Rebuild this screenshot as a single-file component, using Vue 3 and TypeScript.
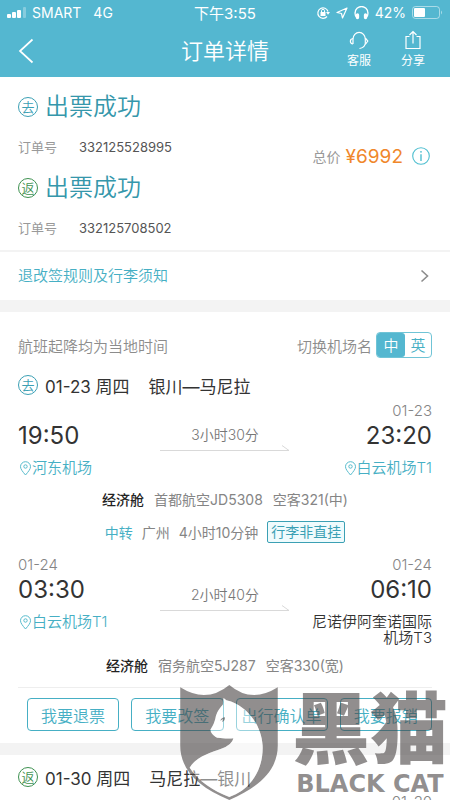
<script setup lang="ts">
import { ref } from 'vue'

interface Stop {
  date?: string
  time: string
  airport: string
  linked: boolean
}

interface Segment {
  from: Stop
  to: Stop
  duration: string
  cabin: string
  flight: string
  plane: string
}

const orders = [
  { mark: '去', kind: 'go', status: '出票成功', no: '332125528995' },
  { mark: '返', kind: 'back', status: '出票成功', no: '332125708502' },
]

const first: Segment = {
  from: { time: '19:50', airport: '河东机场', linked: true },
  to: { date: '01-23', time: '23:20', airport: '白云机场T1', linked: true },
  duration: '3小时30分',
  cabin: '经济舱',
  flight: '首都航空JD5308',
  plane: '空客321(中)',
}

const second: Segment = {
  from: { date: '01-24', time: '03:30', airport: '白云机场T1', linked: true },
  to: { date: '01-24', time: '06:10', airport: '尼诺伊阿奎诺国际机场T3', linked: false },
  duration: '2小时40分',
  cabin: '经济舱',
  flight: '宿务航空5J287',
  plane: '空客330(宽)',
}

const segments = [first, second]
const actions = ['我要退票', '我要改签', '出行确认单', '我要报销']
const languages = ['中', '英']
const language = ref('中')
</script>

<template>
  <div class="page">
    <header class="header">
      <div class="status">
        <div class="status-side">
          <svg class="signal" width="20" height="12" viewBox="0 0 20 12" fill="#fff">
            <rect x="0" y="7" width="4" height="4" rx="1" />
            <rect x="5" y="5" width="4" height="6" rx="1" />
            <rect x="10" y="3" width="4" height="8" rx="1" />
            <rect x="16" y="0" width="3" height="11" rx="1" opacity=".3" />
          </svg>
          <span>SMART</span>
          <span class="network">4G</span>
        </div>
        <span class="clock">下午3:55</span>
        <div class="status-side right">
          <svg width="14" height="14" viewBox="0 0 14 14" fill="none" stroke="#fff">
            <path d="M11 10.5A5.2 5.2 0 1 1 12 5.5" stroke-width="1.2" />
            <path d="M10 6h4l-2 2.700z" fill="#fff" stroke="none" />
            <rect x="4.500" y="6" width="5" height="4" fill="#fff" stroke="none" />
            <path d="M5.500 6V4.800a1.500 1.500 0 0 1 3 0V6" />
          </svg>
          <svg width="12" height="12" viewBox="0 0 12 12" fill="none" stroke="#fff" stroke-width="1.200">
            <path d="M11 1 1 5.500l4.500 1L6.500 11z" stroke-linejoin="round" />
          </svg>
          <svg width="15" height="14" viewBox="0 0 15 14" fill="none" stroke="#fff" stroke-width="1.300">
            <path d="M3 12C1 10 1 7.500 1.200 6.500a6.300 6 0 0 1 12.600 0C14 7.500 14 10 12 12" />
            <rect x="2.500" y="8" width="2" height="4.500" rx="1" fill="#fff" />
            <rect x="10.500" y="8" width="2" height="4.500" rx="1" fill="#fff" />
          </svg>
          <span>42%</span>
          <svg width="31" height="13" viewBox="0 0 31 13" fill="none">
            <rect x=".5" y=".5" width="27" height="12" rx="3" stroke="#fff" opacity=".5" />
            <rect x="2" y="2" width="11" height="9" rx="1" fill="#fff" />
            <path d="M29 4.500v4q2-2 0-4" fill="#fff" opacity=".5" />
          </svg>
        </div>
      </div>
      <div class="nav">
        <button class="nav-back" type="button" aria-label="返回">
          <svg width="16" height="26" viewBox="0 0 16 26" fill="none" stroke="#fff" stroke-width="1.700">
            <path d="M14.500 1.500 2 13l12.500 11.500" />
          </svg>
        </button>
        <h1>订单详情</h1>
        <div class="nav-tools">
          <button type="button">
            <svg width="20" height="20" viewBox="0 0 20 20" fill="none" stroke="#fff" stroke-width="1.200">
              <path d="M4 14V9a6 6.500 0 0 1 12.300 0v4.500C15.800 16 13.500 18 10.500 18.500" />
              <path d="M4 8.500C.5 9 .5 13.500 4 14M16.300 8l2.500 3-2.500 3.500" />
            </svg>
            <span>客服</span>
          </button>
          <button type="button">
            <svg width="20" height="20" viewBox="0 0 20 20" fill="none" stroke="#fff" stroke-width="1.200">
              <path d="M6.500 6.500H3v12h14v-12h-3.500M10 13.500V1.500M6.500 5 10 1.500 13.500 5" />
            </svg>
            <span>分享</span>
          </button>
        </div>
      </div>
    </header>

    <main>
      <section class="summary">
        <div class="orders">
          <div v-for="o in orders" :key="o.no" class="order">
            <div class="order-title">
              <span class="mark" :class="o.kind">{{ o.mark }}</span>
              <h2>{{ o.status }}</h2>
            </div>
            <div class="order-no">
              <span class="label">订单号</span>
              <span>{{ o.no }}</span>
            </div>
          </div>
        </div>
        <div class="total">
          <span class="label">总价</span>
          <strong>¥6992</strong>
          <button type="button" aria-label="价格明细">
            <svg width="18" height="18" viewBox="0 0 18 18" fill="none" stroke="#4fbfd0" stroke-width="1.100">
              <circle cx="9" cy="9" r="8.300" />
              <path d="M9 7.300v6.700" stroke-width="1.400" />
              <circle cx="9" cy="4.800" r=".9" fill="#4fbfd0" stroke="none" />
            </svg>
          </button>
        </div>
      </section>

      <a class="rules" href="#rules">
        <span>退改签规则及行李须知</span>
        <svg width="10" height="14" viewBox="0 0 10 14" fill="none" stroke="#8c8c8c" stroke-width="1.600">
          <path d="M1.500 1.500 7.500 7l-6 5.500" />
        </svg>
      </a>

      <section class="trip">
        <div class="notice">
          <span>航班起降均为当地时间</span>
          <div class="switch">
            <span>切换机场名</span>
            <div class="toggle">
              <button
                v-for="l in languages"
                :key="l"
                type="button"
                :class="{ active: language === l }"
                :aria-pressed="language === l"
                @click="language = l"
              >{{ l }}</button>
            </div>
          </div>
        </div>

        <div class="route">
          <span class="mark go">去</span>
          <span>01-23 周四</span>
          <span class="cities">银川—马尼拉</span>
        </div>

        <template v-for="(s, i) in segments" :key="s.flight">
          <div class="segment">
            <div class="stop">
              <span class="date">{{ s.from.date }}</span>
              <span class="time">{{ s.from.time }}</span>
              <a class="airport" href="#map">
                <svg width="14" height="15" viewBox="0 0 14 15" fill="none" stroke="#58bccd">
                  <path d="M7.500 14C4.500 10.500 2.500 8 2.500 5.700a5 5 0 0 1 10 0C12.500 8 10.500 10.500 7.500 14z" />
                  <circle cx="7.500" cy="5.500" r="1.700" />
                </svg>{{ s.from.airport }}</a>
            </div>
            <div class="duration">
              <span>{{ s.duration }}</span>
              <svg viewBox="0 0 130 6" fill="none" stroke="#d9d9d9">
                <path d="M0 5.500h129L122 .5" />
              </svg>
            </div>
            <div class="stop end">
              <span class="date">{{ s.to.date }}</span>
              <span class="time">{{ s.to.time }}</span>
              <a v-if="s.to.linked" class="airport" href="#map">
                <svg width="14" height="15" viewBox="0 0 14 15" fill="none" stroke="#58bccd">
                  <path d="M7.500 14C4.500 10.500 2.500 8 2.500 5.700a5 5 0 0 1 10 0C12.500 8 10.500 10.500 7.500 14z" />
                  <circle cx="7.500" cy="5.500" r="1.700" />
                </svg>{{ s.to.airport }}</a>
              <span v-else class="airport plain">{{ s.to.airport }}</span>
            </div>
          </div>
          <div class="cabin">
            <b>{{ s.cabin }}</b>
            <span>{{ s.flight }}</span>
            <span>{{ s.plane }}</span>
          </div>
          <div v-if="i === 0" class="transfer">
            <span class="accent">中转</span>
            <span>广州</span>
            <span>4小时10分钟</span>
            <span class="tag">行李非直挂</span>
          </div>
        </template>

        <div class="actions">
          <button v-for="a in actions" :key="a" type="button">{{ a }}</button>
        </div>
      </section>

      <section class="trip return">
        <div class="route">
          <span class="mark back">返</span>
          <span>01-30 周四</span>
          <span class="cities">马尼拉—银川</span>
        </div>
        <div class="stop end">
          <span class="date">01-30</span>
        </div>
      </section>
    </main>

    <div class="watermark">
      <svg width="98" height="115" viewBox="0 0 290 342">
        <path
          class="shield"
          fill-rule="evenodd"
          d="M0 7Q78 56 146 0Q212 56 290 7V180C290 250 240 302 146 342C50 302 0 250 0 180ZM129 39L137 45L151 49C205 70 241 122 245 180C248 245 215 300 165 325L146 333C98 314 53 286 28 246C45 215 90 200 120 190Q155 178 158 158C140 162 120 156 110 157C98 149 90 142 90 132C98 120 103 110 106 92C111 76 120 66 127 58Z"
        />
        <path
          class="cat"
          d="M129 39L137 45L151 49C205 70 241 122 245 180C248 245 215 300 165 325L146 333C98 314 53 286 28 246C45 215 90 200 120 190Q155 178 158 158C140 162 120 156 110 157C98 149 90 142 90 132C98 120 103 110 106 92C111 76 120 66 127 58Z"
        />
        <path class="shield" d="M119 106Q122 97 133 96Q134 107 124 110L128 101Z" />
      </svg>
      <div class="brand">
        <span class="brand-cn">黑猫</span>
        <span class="brand-en">BLACK CAT</span>
      </div>
    </div>
  </div>
</template>

<style>
body {
  margin: 0;
}
</style>

<style scoped>
.page {
  position: relative;
  height: 100vh;
  overflow: hidden;
  background: #fff;
  color: #333;
  font-family: Inter, "Noto Sans CJK SC", sans-serif;
  font-size: 14px;
  font-weight: 400;
}
* {
  box-sizing: border-box;
}
button {
  padding: 0;
  border: 0;
  background: none;
  color: inherit;
  font: inherit;
}
a {
  color: inherit;
  text-decoration: none;
}
svg {
  display: block;
  flex: none;
}
h1,
h2 {
  margin: 0;
  font-weight: 350;
}
.header {
  height: 77px;
  background: #54b7d0;
  color: #fff;
}
.status {
  display: grid;
  grid-template-columns: 1fr auto 1fr;
  align-items: center;
  height: 25px;
  padding: 0 7px;
}
.clock {
  font-size: 15px;
}
.status-side {
  display: flex;
  align-items: center;
  gap: 5px;
}
.network {
  margin-left: 7px;
}
.right {
  justify-content: flex-end;
  gap: 6px;
}
.nav {
  display: grid;
  grid-template-columns: 1fr auto 1fr;
  align-items: center;
  height: 52px;
  padding: 0 18px;
}
h1 {
  font-size: 22px;
  line-height: 50px;
}
.nav-tools {
  display: flex;
  justify-content: flex-end;
  gap: 30px;
  padding-right: 7px;
}
.nav-tools button {
  display: flex;
  flex-direction: column;
  align-items: center;
  font-size: 12px;
  line-height: 22px;
}
.summary {
  display: flex;
  justify-content: space-between;
  align-items: center;
  padding: 10px 20px 7px 18px;
  border-bottom: 2px solid #f3f3f3;
}
.order-title {
  display: flex;
  align-items: center;
  gap: 7px;
  height: 40px;
}
.mark {
  display: flex;
  flex: none;
  align-items: center;
  justify-content: center;
  width: 20px;
  height: 20px;
  border: 1px solid;
  border-radius: 50%;
  font-size: 13px;
  font-weight: 350;
  line-height: 18px;
}
.go {
  color: #3ba0b4;
}
.back {
  color: #3d9150;
}
h2 {
  color: #3597ab;
  font-size: 24px;
  line-height: 40px;
}
.order-no {
  display: flex;
  gap: 22px;
  height: 35px;
  margin-bottom: 6px;
  color: #555;
  font-size: 13px;
  line-height: 41px;
}
.order:last-child .order-no {
  margin-bottom: 0;
}
.label {
  color: #999;
}
.total {
  display: flex;
  align-items: center;
  gap: 5px;
  padding-bottom: 18px;
}
.total strong {
  color: #f0872b;
  font-size: 19px;
  font-weight: 400;
}
.total button {
  margin-left: 4px;
}
.rules {
  display: flex;
  align-items: center;
  justify-content: space-between;
  height: 60px;
  padding: 0 20px 0 18px;
  border-bottom: 12px solid #f3f3f3;
  color: #46afc4;
  font-size: 15px;
  font-weight: 350;
  line-height: 46px;
}
.trip {
  padding: 18px 18px 0;
}
.notice,
.switch {
  display: flex;
  align-items: center;
  justify-content: space-between;
}
.notice {
  height: 30px;
  color: #8c8c8c;
  font-size: 15px;
  font-weight: 350;
}
.switch {
  gap: 4px;
}
.toggle {
  display: flex;
  height: 26px;
  overflow: hidden;
  border: 1px solid #70c4d6;
  border-radius: 4px;
  color: #46afc4;
}
.toggle button {
  width: 26px;
  line-height: 26px;
}
.toggle .active {
  width: 28px;
  border-radius: 0 3px 3px 0;
  background: #54b7d0;
  color: #fff;
}
.route {
  display: flex;
  align-items: center;
  gap: 7px;
  height: 50px;
  font-size: 17px;
}
.cities {
  margin-left: 12px;
}
.segment {
  display: grid;
  grid-template-columns: 1fr 130px 1fr;
  column-gap: 8px;
  margin-top: -10px;
}
.stop {
  display: flex;
  flex-direction: column;
}
.end {
  align-items: flex-end;
  text-align: right;
}
.date {
  height: 21px;
  color: #858585;
  font-size: 15px;
  font-weight: 350;
  line-height: 21px;
}
.time {
  font-size: 24px;
  line-height: 30px;
}
.airport {
  display: flex;
  align-items: center;
  margin-top: 5px;
  color: #46afc4;
  font-size: 15px;
  font-weight: 350;
  line-height: 24px;
}
.plain {
  width: 120px;
  margin-top: 9px;
  color: #333;
  line-height: 16px;
}
.duration {
  align-self: center;
  padding-bottom: 5px;
  color: #777;
  font-weight: 350;
  line-height: 20px;
  text-align: center;
}
.duration svg {
  width: 100%;
}
.cabin,
.transfer {
  display: flex;
  align-items: center;
  justify-content: center;
  gap: 10px;
  color: #858585;
}
.cabin {
  height: 38px;
}
.cabin b {
  color: #222;
  font-weight: 500;
}
.transfer {
  gap: 9px;
  height: 28px;
  margin-bottom: 18px;
}
.accent {
  color: #46afc4;
}
.tag {
  padding: 0 3px;
  border: 1px solid #3ba0b4;
  border-radius: 2px;
  background: #effbfd;
  color: #3ba0b4;
  line-height: 20px;
}
.actions {
  display: grid;
  grid-template-columns: repeat(4, 1fr);
  gap: 12px;
  margin-top: 3px;
  padding: 10px 0 12px 9px;
  border-top: 1px solid #eee;
}
.actions button {
  height: 33px;
  border: 1px solid #46afc4;
  border-radius: 4px;
  color: #46afc4;
  font-size: 16px;
  font-weight: 350;
}
.return {
  padding-top: 0;
  border-top: 12px solid #f3f3f3;
}
.return .route {
  height: 44px;
}
.return .stop {
  margin-top: -8px;
}
.watermark {
  position: absolute;
  right: 2px;
  bottom: 0;
  display: flex;
  gap: 14px;
  color: rgba(72, 67, 67, 0.6);
  pointer-events: none;
}
.shield {
  fill: rgba(72, 67, 67, 0.6);
}
.cat {
  fill: rgba(255, 255, 255, 0.45);
}
.brand {
  display: flex;
  flex-direction: column;
  align-items: center;
}
.brand-cn {
  font-family: "Noto Sans CJK SC", sans-serif;
  font-size: 78px;
  font-weight: 900;
  line-height: 78px;
}
.brand-en {
  margin-top: 6px;
  font-family: "DejaVu Sans", sans-serif;
  font-size: 24px;
  font-weight: 700;
  line-height: 31px;
}
</style>
